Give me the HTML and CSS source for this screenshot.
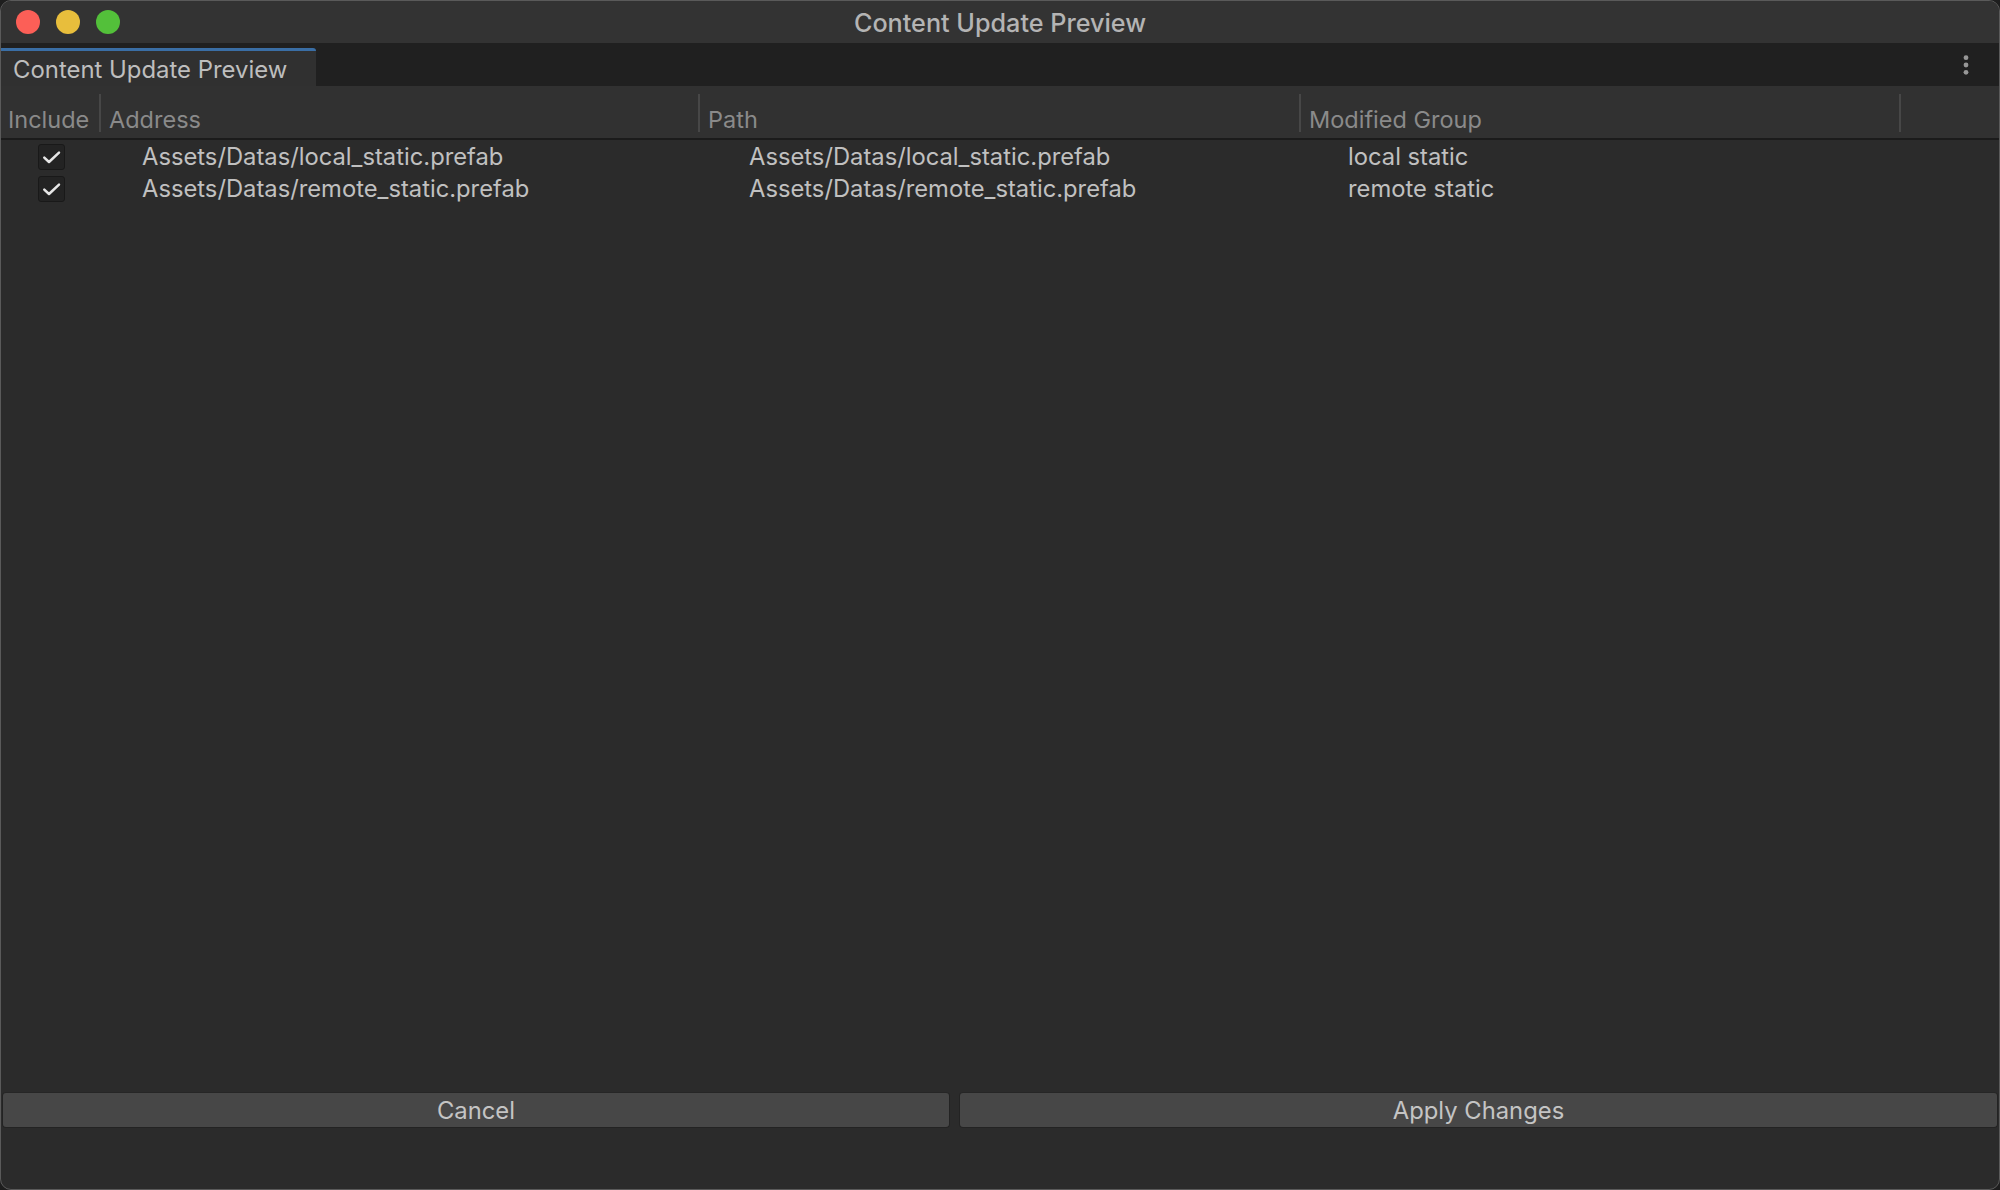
FILE: index.html
```html
<!DOCTYPE html>
<html lang="en">
<head>
<meta charset="utf-8">
<title>Content Update Preview</title>
<link rel="stylesheet" href="styles.css">
</head>
<body>
<div class="window">
  <div class="titlebar">
    <div class="lights">
      <span class="light red"></span>
      <span class="light yellow"></span>
      <span class="light green"></span>
    </div>
    <div class="title">Content Update Preview</div>
  </div>
  <div class="tabbar">
    <div class="tab">Content Update Preview</div>
    <div class="menu">
      <svg width="8" height="24" viewBox="0 0 8 24"><circle cx="4" cy="4.7" r="2.4" fill="#979797"/><circle cx="4" cy="12" r="2.4" fill="#979797"/><circle cx="4" cy="19.3" r="2.4" fill="#979797"/></svg>
    </div>
  </div>
  <div class="table">
    <div class="thead">
      <div class="th th-include">Include</div>
      <div class="th">Address</div>
      <div class="th">Path</div>
      <div class="th">Modified Group</div>
      <div class="th th-last"></div>
    </div>
    <div class="tbody">
      <div class="row">
        <div class="cell cell-include"><span class="check"><svg width="26" height="26" viewBox="0 0 26 26"><path d="M5.5 13.6 L10.4 18.2 L20.8 8.4" fill="none" stroke="#e6e6e6" stroke-width="2.6" stroke-linecap="round" stroke-linejoin="round"/></svg></span></div>
        <div class="cell cell-address">Assets/Datas/local_static.prefab</div>
        <div class="cell cell-path">Assets/Datas/local_static.prefab</div>
        <div class="cell cell-group">local static</div>
        <div class="cell"></div>
      </div>
      <div class="row">
        <div class="cell cell-include"><span class="check"><svg width="26" height="26" viewBox="0 0 26 26"><path d="M5.5 13.6 L10.4 18.2 L20.8 8.4" fill="none" stroke="#e6e6e6" stroke-width="2.6" stroke-linecap="round" stroke-linejoin="round"/></svg></span></div>
        <div class="cell cell-address">Assets/Datas/remote_static.prefab</div>
        <div class="cell cell-path">Assets/Datas/remote_static.prefab</div>
        <div class="cell cell-group">remote static</div>
        <div class="cell"></div>
      </div>
    </div>
  </div>
  <div class="buttons">
    <button class="btn btn-cancel">Cancel</button>
    <button class="btn btn-apply">Apply Changes</button>
  </div>
  <div class="footer"></div>
</div>
</body>
</html>
```

FILE: styles.css
```css
* { box-sizing: border-box; }
html, body { margin: 0; padding: 0; background: #1e1e1e; }
body { font-family: Inter, "Noto Sans", "Liberation Sans", sans-serif; }

.window {
  width: 2000px;
  height: 1190px;
  display: flex;
  flex-direction: column;
  background: #2b2b2b;
  border: 1px solid #5a5a5a;
  border-radius: 11px;
  overflow: hidden;
}

.titlebar {
  height: 42px;
  flex: none;
  background: #333333;
  display: flex;
  align-items: center;
  position: relative;
}
.lights {
  display: flex;
  gap: 16px;
  padding-left: 15px;
}
.light {
  width: 24px;
  height: 24px;
  border-radius: 50%;
  display: block;
}
.red { background: #fc5f57; }
.yellow { background: #e8be3c; }
.green { background: #53c03a; }
.title {
  position: absolute;
  left: 0;
  right: 0;
  top: 1px;
  bottom: 0;
  display: flex;
  align-items: center;
  justify-content: center;
  font-size: 25.2px;
  font-weight: 500;
  color: #b4b4b4;
  pointer-events: none;
}

.tabbar {
  height: 43px;
  flex: none;
  background: #202020;
  display: flex;
  align-items: stretch;
  justify-content: space-between;
  padding-top: 5px;
}
.tab {
  width: 315px;
  background: #303030;
  border-top: 3px solid #3a6ea5;
  border-top-right-radius: 3px;
  color: #bebebe;
  font-size: 23.9px;
  padding-left: 12px;
  display: flex;
  align-items: center;
  padding-top: 1px;
}
.menu {
  width: 64px;
  display: flex;
  align-items: center;
  justify-content: center;
  padding-right: 2px;
  padding-bottom: 5px;
}

.table {
  flex: 1;
  display: flex;
  flex-direction: column;
}
.thead {
  height: 54px;
  flex: none;
  background: #313131;
  border-bottom: 2px solid #1b1b1b;
  display: grid;
  grid-template-columns: 98px 599px 601px 600px 1fr;
  align-items: stretch;
}
.th {
  font-size: 23.5px;
  color: #8a8a8a;
  padding-left: 10px;
  padding-top: 19px;
  position: relative;
  white-space: nowrap;
}
.th + .th::before {
  content: "";
  position: absolute;
  left: 0;
  top: 8px;
  height: 38px;
  width: 2px;
  background: #474747;
}
.th-include { padding-left: 7px; }

.tbody { display: flex; flex-direction: column; }
.row {
  height: 32px;
  display: grid;
  grid-template-columns: 98px 599px 601px 600px 1fr;
  align-items: center;
}
.cell {
  font-size: 23.75px;
  color: #c0c0c0;
  white-space: nowrap;
}
.cell-include { padding-left: 37px; display: flex; align-items: center; }
.check {
  width: 27px;
  height: 26px;
  background: #232323;
  border: 1px solid #191919;
  border-radius: 3px;
  display: flex;
  align-items: center;
  justify-content: center;
  margin-top: 2px;
}
.check svg { display: block; }
.cell-address { padding-left: 43px; }
.cell-path { padding-left: 51px; }
.cell-group { padding-left: 49px; }

.buttons {
  flex: none;
  display: flex;
  gap: 9px;
  padding: 0 1px 0 1px;
}
.btn {
  height: 36px;
  background: #474747;
  border: 1px solid #232323;
  border-top-color: #262626;
  border-radius: 4px;
  color: #c4c4c4;
  font-family: Inter, "Noto Sans", "Liberation Sans", sans-serif;
  font-size: 23.8px;
  padding: 0;
  margin: 0;
}
.btn-cancel { width: 948px; flex: none; }
.btn-apply { flex: 1; }

.footer {
  height: 61px;
  flex: none;
}
```
